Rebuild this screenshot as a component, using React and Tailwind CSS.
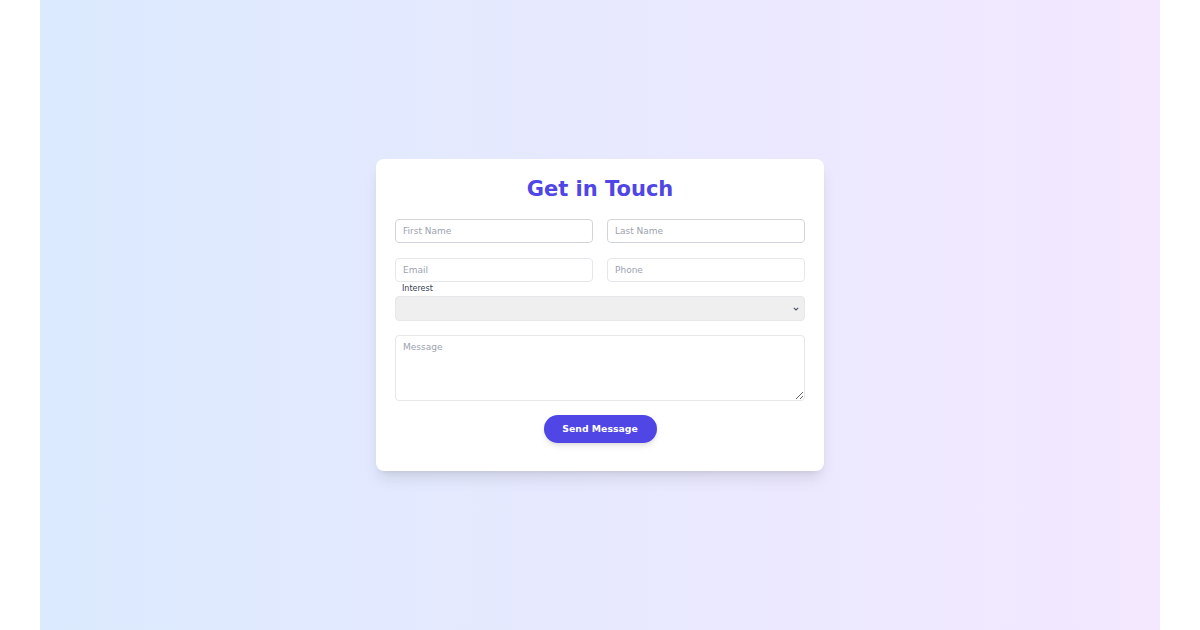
import React from "react";

export default function App() {
  const font = { fontFamily: '"DejaVu Sans", "Liberation Sans", sans-serif' };
  const inputBase =
    "h-6 w-full rounded-[4px] border px-[7px] text-[9px] text-[#374151] placeholder:text-[#9ca3af] outline-none bg-white";
  return (
    <div className="w-full h-[630px] bg-white px-10" style={font}>
      <div className="h-full bg-gradient-to-r from-[#dbeafe] to-[#f3e8ff] flex items-center justify-center">
        <div className="w-[448px] bg-white rounded-lg shadow-[0_10px_15px_-3px_rgba(0,0,0,0.1),0_4px_6px_-4px_rgba(0,0,0,0.1)] px-[19px] pt-4 pb-7">
          <h1 className="text-center text-[21px] leading-[28px] font-bold text-[#4f46e5] mb-4">
            Get in Touch
          </h1>
          <form className="flex flex-col" onSubmit={(e) => e.preventDefault()}>
            <div className="grid grid-cols-2 gap-x-3.5 gap-y-[15px]">
              <input type="text" placeholder="First Name" className={inputBase + " border-[#d1d5db]"} />
              <input type="text" placeholder="Last Name" className={inputBase + " border-[#d1d5db]"} />
              <input type="email" placeholder="Email" className={inputBase + " border-[#e5e7eb]"} />
              <input type="tel" placeholder="Phone" className={inputBase + " border-[#e5e7eb]"} />
            </div>
            <label className="block pl-[7px] pb-px text-[8px] leading-[13px] text-[#374151]">Interest</label>
            <div className="relative">
              <select className="block appearance-none h-[25px] w-full rounded-[4px] border border-[#e5e7eb] bg-[#efefef] px-[7px] text-[9px] text-[#374151] outline-none">
                <option value=""></option>
              </select>
              <svg
                className="absolute right-[6px] top-[11px] pointer-events-none"
                width="6"
                height="4"
                viewBox="0 0 6 4"
                fill="none"
              >
                <path d="M0.8 0.8 L3 3 L5.2 0.8" stroke="#4b5563" strokeWidth="1.1" />
              </svg>
            </div>
            <textarea
              placeholder="Message"
              className="block mt-3.5 h-[66px] w-full rounded-[4px] border border-[#e5e7eb] px-[7px] py-[5px] text-[9px] text-[#374151] placeholder:text-[#9ca3af] outline-none"
            />
            <div className="mt-3.5 flex justify-center">
              <button
                type="submit"
                className="w-[113px] h-7 rounded-full bg-[#4f46e5] text-white text-[9.3px] font-bold shadow-[0_4px_6px_-1px_rgba(0,0,0,0.1),0_2px_4px_-2px_rgba(0,0,0,0.1)]"
              >
                Send Message
              </button>
            </div>
          </form>
        </div>
      </div>
    </div>
  );
}
